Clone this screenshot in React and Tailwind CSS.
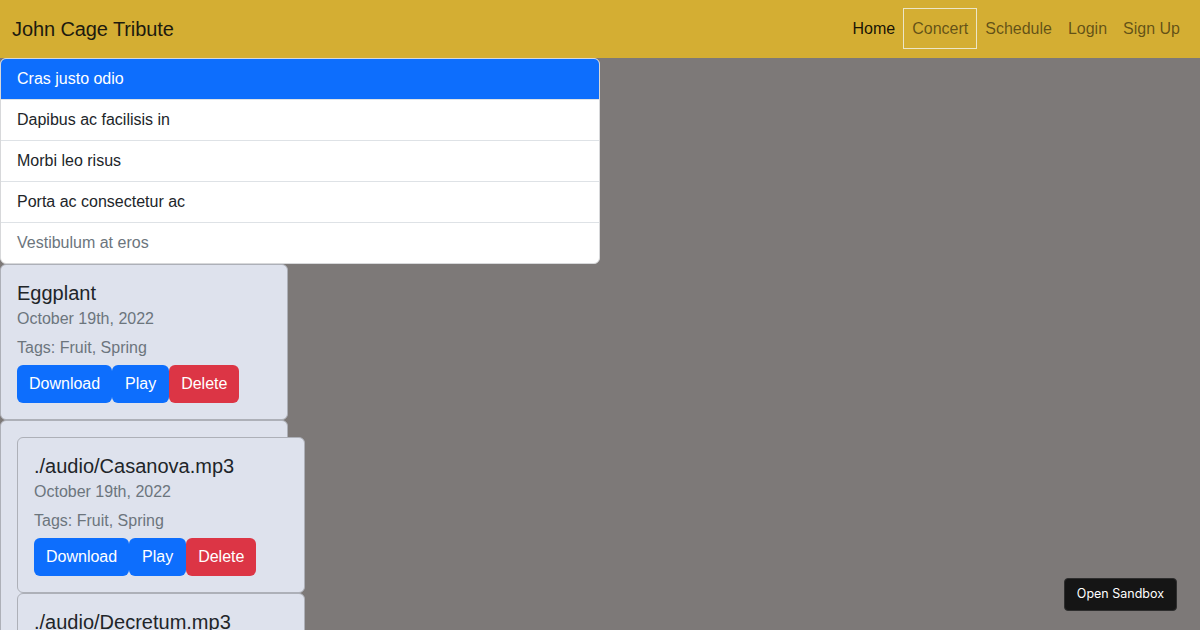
const items = [
  "Cras justo odio",
  "Dapibus ac facilisis in",
  "Morbi leo risus",
  "Porta ac consectetur ac",
  "Vestibulum at eros",
];

const tracks = ["./audio/Casanova.mp3", "./audio/Decretum.mp3"];

function Buttons() {
  return (
    <div className="flex">
      <button className="h-[38px] px-3 rounded-md bg-[#0d6efd] text-white text-base">Download</button>
      <button className="h-[38px] w-[57px] flex items-center justify-center rounded-md bg-[#0d6efd] text-white text-base">Play</button>
      <button className="h-[38px] px-3 rounded-md bg-[#dc3545] text-white text-base">Delete</button>
    </div>
  );
}

function Card({ title }) {
  return (
    <div className="w-[288px] shrink-0 bg-[#dee2ed] border border-[#adb0b8] rounded-md p-4">
      <h5 className="text-xl leading-6 text-[#212529] mb-1">{title}</h5>
      <h6 className="text-base leading-[19px] text-[#6c757d]">October 19th, 2022</h6>
      <p className="text-base leading-6 text-[#6c757d] mt-[8px] mb-[5px]">Tags: Fruit, Spring</p>
      <Buttons />
    </div>
  );
}

export default function App() {
  return (
    <div className="min-h-screen bg-[#7d7978] font-['Liberation_Sans',Arial,sans-serif]">
      {/* navbar */}
      <nav className="h-[58px] bg-[#d4ae33] flex items-center justify-between pl-3 pr-3">
        <span className="text-xl text-[#1d1a0f] tracking-[-0.1px]">John Cage Tribute</span>
        <div className="flex items-center text-base">
          <a className="px-2 py-2 text-black/90">Home</a>
          <a className="px-2 h-[41px] -mt-px flex items-center border border-[#ece6c8] text-black/55">Concert</a>
          <a className="px-2 py-2 text-black/55">Schedule</a>
          <a className="px-2 py-2 text-black/55">Login</a>
          <a className="px-2 py-2 text-black/55">Sign Up</a>
        </div>
      </nav>

      {/* list group */}
      <ul className="w-[600px] bg-white rounded-md overflow-hidden border border-[#d7d8da]">
        {items.map((t, i) => (
          <li
            key={t}
            className={
              i === 0
                ? "px-4 h-[40px] flex items-center bg-[#0d6efd] text-white"
                : i === items.length - 1
                ? "px-4 h-[41px] flex items-center border-t border-[#dee2e6] text-[#6c757d]"
                : "px-4 h-[41px] flex items-center border-t border-[#dee2e6] text-[#212529]"
            }
          >
            {t}
          </li>
        ))}
      </ul>

      <Card title="Eggplant" />

      {/* nested track list */}
      <div className="w-[288px] bg-[#dee2ed] border border-[#adb0b8] rounded-md p-4 pr-0">
        {tracks.map((t) => (
          <Card key={t} title={t} />
        ))}
      </div>

      <button className="fixed right-[23px] bottom-[19px] h-[33px] px-3 rounded bg-[#151515] border border-[#2e2e2e] text-white text-[12.5px] font-['Inter',sans-serif]">
        Open Sandbox
      </button>
    </div>
  );
}
